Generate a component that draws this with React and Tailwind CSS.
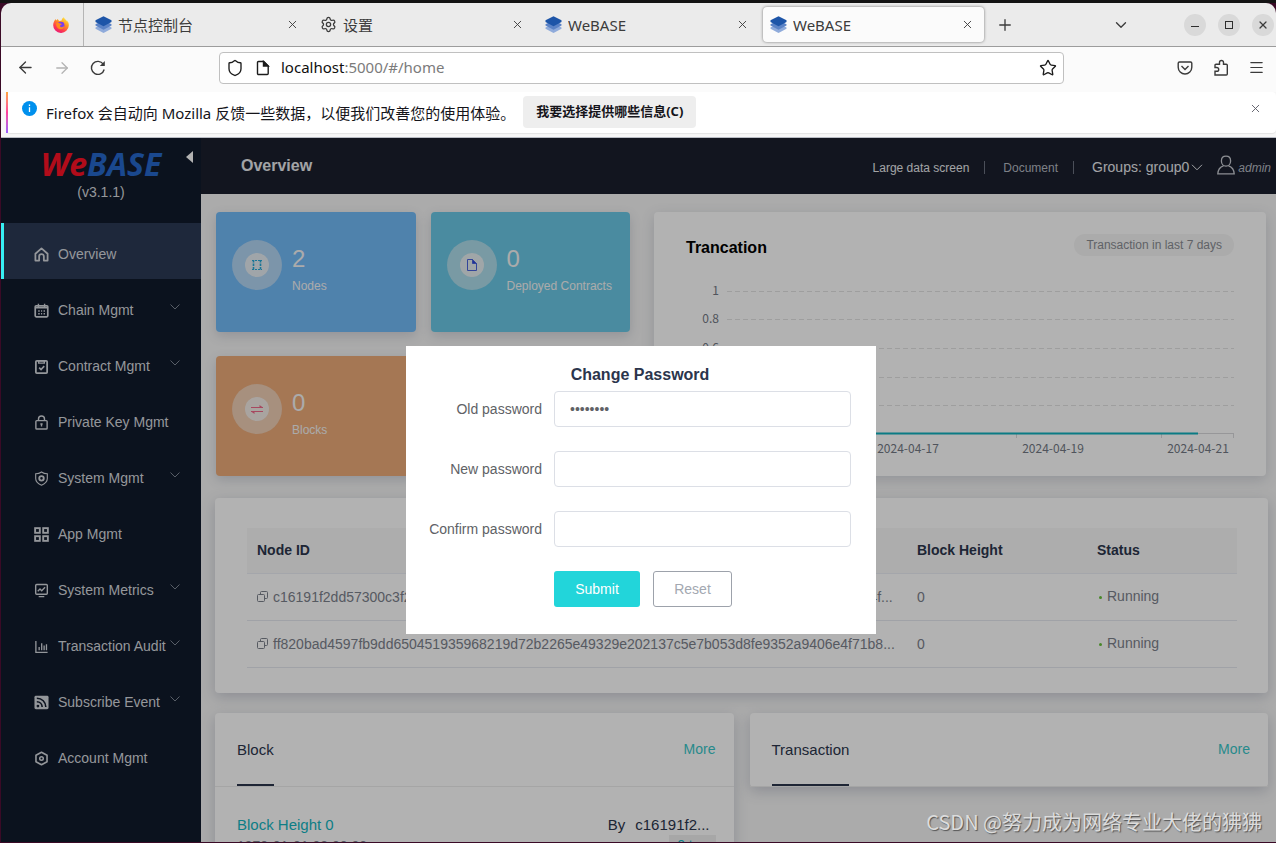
import { useState } from 'react';
import {
  ArrowLeft,
  ArrowRight,
  ChevronDown,
  Menu,
  Plus,
  Settings,
  Shield,
  Star,
  X,
} from 'lucide-react';
import clsx from 'clsx';

const TABS = [
  { id: 1, title: '节点控制台', icon: 'webase' },
  { id: 2, title: '设置', icon: 'settings' },
  { id: 3, title: 'WeBASE', icon: 'webase' },
  { id: 4, title: 'WeBASE', icon: 'webase', active: true },
];

const MENU = [
  { label: 'Overview', icon: 'home', active: true },
  { label: 'Chain Mgmt', icon: 'chain', children: true },
  { label: 'Contract Mgmt', icon: 'contract', children: true },
  { label: 'Private Key Mgmt', icon: 'lock' },
  { label: 'System Mgmt', icon: 'system', children: true },
  { label: 'App Mgmt', icon: 'app' },
  { label: 'System Metrics', icon: 'metrics', children: true },
  { label: 'Transaction Audit', icon: 'audit', children: true },
  { label: 'Subscribe Event', icon: 'event', children: true },
  { label: 'Account Mgmt', icon: 'account' },
];

const STATS = [
  { label: 'Nodes', value: 2, icon: 'nodes', bg: 'bg-[#72baf7]' },
  { label: 'Deployed Contracts', value: 0, icon: 'contracts', bg: 'bg-[#6bc8e5]' },
  { label: 'Blocks', value: 0, icon: 'blocks', bg: 'bg-[#ecab79]' },
];

const NODES = [
  {
    id: 'c16191f2dd57300c3f28a7b04e95c16d3e8027ab49d5e063b71a9d284e57c0b396ad18e7402b5d4f...',
    height: 0,
    status: 'Running',
  },
  {
    id: 'ff820bad4597fb9dd650451935968219d72b2265e49329e202137c5e7b053d8fe9352a9406e4f71b8...',
    height: 0,
    status: 'Running',
  },
];

const Y_TICKS = [
  { label: '1', y: 10 },
  { label: '0.8', y: 38 },
  { label: '0.6', y: 67 },
  { label: '0.4', y: 96 },
  { label: '0.2', y: 124 },
];

const X_LABELS = [
  { label: '2024-04-15', x: 77 },
  { label: '2024-04-17', x: 222 },
  { label: '2024-04-19', x: 367 },
  { label: '2024-04-21', x: 512 },
];

const FIELDS = [
  { id: 'old', label: 'Old password' },
  { id: 'new', label: 'New password' },
  { id: 'confirm', label: 'Confirm password' },
];

/* ---------- icons ---------- */

function FirefoxIcon() {
  return (
    <svg width="16" height="16" viewBox="0 0 16 16">
      <defs>
        <linearGradient id="fx" x1="0.8" y1="0" x2="0.2" y2="1">
          <stop offset="0" stopColor="#fff04a" />
          <stop offset="0.35" stopColor="#ff9a1f" />
          <stop offset="0.7" stopColor="#ff3b4e" />
          <stop offset="1" stopColor="#e4157e" />
        </linearGradient>
      </defs>
      <path
        fill="url(#fx)"
        d="M15.4 5.6c-.4-.9-1.1-1.8-1.7-2.1.5 1 .8 1.6.9 2.1C13.600 3.200 12 2.300 10.700.2c-1.400.8-2 2.400-2.100 3.200-.8 0-1.500.2-2.200.5C5.300 3.600 5 2.500 5 2c-.8.400-1.400 1.100-1.800 1.600-.3-.4-.3-1.500-.3-1.700C1.500 3 .2 5.500.2 8a7.800 7.800 0 0 0 15.600.4c.1-.9-.1-1.900-.4-2.800z"
      />
      <circle cx="8" cy="8.200" r="3.400" fill="#7a3df0" />
      <path fill="#ff8a1c" d="M3.200 6.200c1.300-.9 2.600-.6 3.600.1 1 .6 2 .4 2 .9s-1.400.7-1.700 1.300c-.3.800.2 1.500 1.200 1.700 1.200.2 2.300-.5 3-1.600.1 2.400-1.600 3.700-3.500 3.700-2.900 0-5-2.800-4.600-6.100z" />
    </svg>
  );
}

function WebaseIcon() {
  return (
    <svg width="17" height="17" viewBox="0 0 17 17">
      <path fill="#8fabdb" d="M.5 11.500 8.500 7.500l8 4v1.200l-8 4.300-8-4.300z" />
      <path fill="#5b83c6" d="M.5 8.200 8.500 4.200l8 4v1.300l-8 4.200-8-4.200z" />
      <path fill="#1d55a8" d="M.5 4.300 8.500.3l8 4v1.700l-8 4.200-8-4.200z" />
    </svg>
  );
}

const menuShapes = {
  home: (
    <path d="M1.500 7.200 8 1.500l6.500 5.700v7.300H10.500V10a2.500 2.500 0 0 0-5 0v4.500h-4z" strokeWidth="1.900" strokeLinejoin="round" />
  ),
  chain: (
    <>
      <rect x="1.300" y="3" width="13.400" height="11.700" rx="1" strokeWidth="1.800" />
      <path d="M4.700.8v3.700M11.300.8v3.700M1.500 5h13" strokeWidth="1.500" />
      <path d="M4.500 8.500h1.600M7.500 8.500h1.200M10.200 8.500h1.500M4.500 11.500h1.600M7.500 11.500h1.200M10.200 11.500h1.500" strokeWidth="1.600" />
    </>
  ),
  contract: (
    <>
      <rect x="2" y="2" width="12" height="13" rx="1" strokeWidth="1.900" />
      <path d="M5 1.800h6v2.600H5z" strokeWidth="1.500" />
      <path d="m5.500 9.200 2 2 3.400-3.600" strokeWidth="1.700" />
    </>
  ),
  lock: (
    <>
      <rect x="2" y="6" width="12" height="9" rx="1" strokeWidth="1.500" />
      <path d="M4.800 6V4.200a3.200 3.200 0 0 1 6.400 0V6" strokeWidth="1.500" />
      <path d="M8 8.800v3.400M6.800 9.600h2.400" strokeWidth="1.500" />
    </>
  ),
  system: (
    <>
      <path d="M8 1c1.800 1.300 3.900 1.900 6.200 1.900v5c0 3.200-2.400 5.500-6.200 7.300-3.800-1.800-6.200-4.100-6.200-7.300v-5C4.100 2.900 6.200 2.300 8 1z" strokeWidth="1.200" />
      <circle cx="8" cy="7.800" r="2.400" strokeWidth="2" />
    </>
  ),
  app: (
    <g strokeWidth="2">
      <rect x="1.200" y="1.200" width="5" height="5" />
      <rect x="9.800" y="1.200" width="5" height="5" />
      <rect x="1.200" y="9.800" width="5" height="5" />
      <rect x="9.800" y="9.800" width="5" height="5" />
    </g>
  ),
  metrics: (
    <>
      <rect x="1.800" y="1.600" width="12.400" height="10.400" rx="1" strokeWidth="1.500" />
      <path d="m4 8.800 2.400-2.300 1.800 1.800L11.800 4.500M5 14.500h6" strokeWidth="1.500" />
    </>
  ),
  audit: <path d="M2 2v12.300h12.500M5.500 12V8.500M8.200 12V4.500M10.800 12V7M13.300 12V5.500" strokeWidth="1.400" />,
  event: (
    <>
      <rect x=".5" y=".8" width="15" height="14.400" rx="1.500" fill="currentColor" stroke="none" />
      <g stroke="#111a2b" strokeWidth="1.700">
        <path d="M3 3.400c5.500 0 9.600 4 9.600 9.500M3 7.200c3.300 0 5.700 2.400 5.700 5.700" />
        <circle cx="4.200" cy="11.800" r=".6" />
      </g>
    </>
  ),
  account: (
    <>
      <path d="m8 1.300 5.900 3.300v6.800L8 14.700l-5.900-3.300V4.600z" strokeWidth="1.700" strokeLinejoin="round" />
      <circle cx="8" cy="8" r="1.900" strokeWidth="1.600" />
    </>
  ),
};

function MenuIcon({ name }) {
  return (
    <svg width="15" height="15" viewBox="0 0 16 16" fill="none" stroke="currentColor" className="shrink-0">
      {menuShapes[name]}
    </svg>
  );
}

const statShapes = {
  nodes: (
    <g stroke="#27a9d8" fill="none" strokeWidth="1">
      <path d="M2.500 1v10M9.500 1v10" strokeWidth="1.600" strokeDasharray="2.500 1" />
      <path d="M1 1.500h10M1 10.500h10" strokeDasharray="2 1" />
    </g>
  ),
  contracts: (
    <g stroke="#4a63dd" fill="none" strokeWidth="1">
      <path d="M1.500.5h5l4 4v7h-9z" />
      <path d="M6.500.5v4h4z" fill="#3048d8" />
    </g>
  ),
  blocks: (
    <g stroke="#f0698a" fill="#f0698a" strokeWidth="1">
      <path d="M0 4.500h12M0 8.500h12" />
      <path d="M8.500 2v2.500H12zM3.500 11V8.500H0z" stroke="none" />
    </g>
  ),
};

function CopyIcon() {
  return (
    <svg width="11" height="11" viewBox="0 0 11 11" fill="none" stroke="currentColor" className="shrink-0">
      <rect x=".5" y="3.500" width="7" height="7" rx="1" />
      <path d="M3.500 3.500v-2a1 1 0 0 1 1-1h5a1 1 0 0 1 1 1v5a1 1 0 0 1-1 1h-2" />
    </svg>
  );
}

/* ---------- browser ---------- */

function TabStrip() {
  return (
    <div className="flex h-11 items-stretch rounded-t-[10px] border-b border-[#9c9c9c] bg-[#ebebeb] text-[#3c3c3c]">
      <div className="flex w-[83px] items-center justify-end border-r border-[#b5b5b5] pr-[14px]">
        <FirefoxIcon />
      </div>
      {TABS.map((tab) => (
        <div key={tab.id} className="flex w-[225px] py-1 pl-1">
          <div
            className={clsx(
              'flex min-w-0 flex-1 items-center rounded pl-[7px] pr-2.5',
              tab.active && 'bg-[#fbfbfb] shadow-[0_0_3px_rgba(0,0,0,0.5)]'
            )}
          >
            {tab.icon === 'webase' ? <WebaseIcon /> : <Settings className="size-[17px]" strokeWidth={1.8} />}
            <span className="ml-1.5 flex-1 truncate pt-0.5 text-[15px]">{tab.title}</span>
            <button aria-label="Close tab">
              <X className="size-[13px]" strokeWidth={1.7} />
            </button>
          </div>
        </div>
      ))}
      <button aria-label="New tab" className="ml-3">
        <Plus className="size-[18px]" strokeWidth={1.8} />
      </button>
      <div className="ml-auto flex items-center">
        <button aria-label="List all tabs" className="mr-[54px]">
          <ChevronDown className="size-[18px]" strokeWidth={1.8} />
        </button>
        <div className="flex gap-3 pr-0.5">
          <button aria-label="Minimize" className="grid size-[22px] place-items-center rounded-full bg-[#d9d9d9]">
            <span className="mt-1 h-px w-2 bg-[#2e2e2e]" />
          </button>
          <button aria-label="Maximize" className="grid size-[22px] place-items-center rounded-full bg-[#d9d9d9]">
            <span className="size-2 border border-[#2e2e2e]" />
          </button>
          <button aria-label="Close window" className="grid size-[22px] place-items-center rounded-full bg-[#d9d9d9]">
            <X className="size-3" strokeWidth={2.5} />
          </button>
        </div>
      </div>
    </div>
  );
}

function Toolbar() {
  return (
    <div className="flex h-[45px] items-center bg-[#fbfbfb] pb-1 pl-[15px] pr-[11px] text-[#3a3a3a]">
      <div className="flex gap-[18px]">
        <button aria-label="Back"><ArrowLeft className="size-[19px]" strokeWidth={1.7} /></button>
        <button aria-label="Forward" className="text-[#b3b3b3]"><ArrowRight className="size-[18px]" strokeWidth={1.7} /></button>
        <button aria-label="Reload">
          <svg width="18" height="18" viewBox="0 0 18 18" fill="none" stroke="currentColor" strokeWidth="1.400">
            <path d="M15.200 10.500A6.500 6.500 0 1 1 14.300 5.200" />
            <path d="M15.800 2v5h-5z" fill="currentColor" stroke="none" />
          </svg>
        </button>
      </div>
      <div className="mx-[112px] flex h-8 flex-1 items-center rounded border border-[#c0c0c0] bg-white px-1.5 text-[#1c1c1c]">
        <Shield className="size-[18px]" strokeWidth={1.8} />
        <svg width="14" height="16" viewBox="0 0 14 16" className="ml-3" fill="none" stroke="currentColor" strokeWidth="1.400">
          <path d="M2.500 1.500h5.200L12.200 6v7.500a1 1 0 0 1-1 1H2.500a1 1 0 0 1-1-1v-11a1 1 0 0 1 1-1z" />
          <path d="M7.500 1.500V6h4.700z" fill="currentColor" />
        </svg>
        <span className="ml-[11px] flex-1 text-[15px] text-[#7b7b7b]">
          <span className="text-[#0f0f0f]">localhost</span>:5000/#/home
        </span>
        <button aria-label="Bookmark"><Star className="size-[18px]" strokeWidth={1.8} /></button>
      </div>
      <div className="flex gap-[18px]">
        <button aria-label="Pocket">
          <svg width="18" height="18" viewBox="0 0 18 18" fill="none" stroke="currentColor" strokeWidth="1.400">
            <path d="M3.500 3h11a1.300 1.300 0 0 1 1.300 1.300v3.900a6.800 6.800 0 0 1-13.600 0V4.300A1.300 1.300 0 0 1 3.500 3z" />
            <path d="m5.500 7 3.500 3.400L12.500 7" />
          </svg>
        </button>
        <button aria-label="Extensions">
          <svg width="18" height="18" viewBox="0 0 18 18" fill="none" stroke="currentColor" strokeWidth="1.400">
            <path d="M3 16h11.300a1 1 0 0 0 1-1V6.200a1 1 0 0 0-1-1h-2.800V3.500a2 2 0 0 0-4 0v1.700H4a1 1 0 0 0-1 1v2.300h1.800a1.900 1.900 0 0 1 0 3.800H3z" />
          </svg>
        </button>
        <button aria-label="Menu"><Menu className="size-[17px]" strokeWidth={1.7} /></button>
      </div>
    </div>
  );
}

function Notice() {
  return (
    <div className="border-b border-[#b9bcc4] bg-[#f7f7f7] pb-1 pl-[5px]">
      <div className="flex h-[41px] rounded bg-white shadow-[0_1px_1px_rgba(0,0,0,0.08)]">
        <span className="w-0.5 bg-linear-to-b from-[#ffa436] via-[#ff3f9c] to-[#9a5cff]" />
        <svg width="15" height="15" viewBox="0 0 15 15" className="ml-3.5 mt-[9px]">
          <circle cx="7.500" cy="7.500" r="7.500" fill="#0090ed" />
          <path d="M7.500 6.300v4.700M7.500 3.600v1.400" stroke="#fff" strokeWidth="1.300" />
        </svg>
        <p className="ml-[9px] mt-[9px] text-[15px] leading-6 text-[#15141a]">
          Firefox 会自动向 Mozilla 反馈一些数据，以便我们改善您的使用体验。
        </p>
        <button className="ml-2 mt-1 h-8 rounded bg-[#eeeeee] px-[13px] text-[13px] font-bold text-[#15141a]">
          我要选择提供哪些信息(C)
        </button>
        <button aria-label="Dismiss" className="ml-auto mr-3.5 mt-2.5 self-start text-[#5b5b66]">
          <X className="size-[13px]" strokeWidth={1.7} />
        </button>
      </div>
    </div>
  );
}

/* ---------- console ---------- */

function Sidebar() {
  return (
    <aside className="w-[200px] shrink-0 bg-[#111a2b] text-sm text-[#d5d8de]">
      <div className="relative h-[85px] pt-[9px] text-center">
        <div className="font-['Open_Sans',sans-serif] text-[32px] font-bold italic leading-[34px] text-[#2668cc]">
          <span className="text-[#ff1226]">We</span>BASE
        </div>
        <div className="leading-[22px]">(v3.1.1)</div>
        <button aria-label="Collapse menu" className="absolute right-2 top-[13px]">
          <svg width="7" height="12" viewBox="0 0 7 12" fill="#ffffff">
            <path d="M7 0v12L0 6z" />
          </svg>
        </button>
      </div>
      <nav>
        {MENU.map((item) => (
          <a
            key={item.label}
            href="#"
            className={clsx(
              'relative flex h-14 items-center whitespace-nowrap pl-[33px] pr-[21px] pt-1.5',
              item.active && 'bg-[#2c3a55]'
            )}
          >
            {/* marker stays bright above the dialog mask */}
            {item.active && <span className="absolute inset-y-0 left-0 z-10 w-[3px] bg-[#37eef2]" />}
            <MenuIcon name={item.icon} />
            <span className="ml-[9px]">{item.label}</span>
            {item.children && (
              <svg width="10" height="6" viewBox="0 0 10 6" fill="none" stroke="#7f8794" className="mb-1.5 ml-auto shrink-0">
                <path d="m.5.5 4.500 4.500L9.500.5" />
              </svg>
            )}
          </a>
        ))}
      </nav>
    </aside>
  );
}

function Header() {
  return (
    <header className="flex h-14 shrink-0 items-center bg-[#1a1f2d] pl-10 pr-[5px] text-[#e8eaee]">
      <h1 className="text-base font-bold">Overview</h1>
      <div className="ml-auto flex items-center pt-0.5 text-xs">
        <a href="#" className="pt-0.5">Large data screen</a>
        <span className="ml-[15px] h-[13px] w-px bg-[#6c7280]" />
        <a href="#" className="ml-[18px] pt-0.5 text-[#b4b8c0]">Document</a>
        <span className="ml-[15px] h-[13px] w-px bg-[#6c7280]" />
        <button className="ml-[18px] flex items-center text-sm">
          Groups: group0
          <svg width="12" height="7" viewBox="0 0 12 7" fill="none" stroke="currentColor" className="ml-0.5">
            <path d="m1 .8 5 5 5-5" />
          </svg>
        </button>
        <button className="ml-3.5 flex items-center gap-[3px] italic text-[#b4b8c0]">
          <svg width="18" height="20" viewBox="0 0 18 20" fill="none" stroke="#c9ccd3" strokeWidth="1.300" className="mb-1">
            <path d="M9 1.200c2.700 0 4.600 1.900 4.600 4.800S11.700 11.200 9 11.200 4.400 8.900 4.400 6 6.300 1.200 9 1.200z" />
            <path d="M6.500 10.800C3.300 11.800 1 14.500.8 18.800h16.400c-.2-4.300-2.500-7-5.700-8" />
          </svg>
          <span className="pt-0.5">admin</span>
        </button>
      </div>
    </header>
  );
}

function StatCard({ label, value, icon, bg }) {
  return (
    <div className={clsx('flex h-[120px] rounded-sm pl-4 pt-7 text-[#f5f5f5] shadow-[0_4px_12px_rgba(70,80,110,0.2)]', bg)}>
      <div className="grid size-[50px] shrink-0 place-items-center rounded-full bg-[#f2f2f2]/50">
        <div className="grid size-6 place-items-center rounded-full bg-[#f2f2f2]/80">
          <svg width="12" height="12" viewBox="0 0 12 12">{statShapes[icon]}</svg>
        </div>
      </div>
      <div className="ml-2.5 mt-1 whitespace-nowrap">
        <div className="text-2xl leading-[30px]">{value}</div>
        <div className="mt-0.5 text-xs leading-5">{label}</div>
      </div>
    </div>
  );
}

function ChartCard() {
  return (
    <section className="rounded-sm bg-white px-8 pt-[22px] shadow-[0_4px_14px_rgba(70,80,110,0.2)]">
      <div className="flex items-start justify-between">
        <h2 className="pt-0.5 text-base font-bold text-black">Trancation</h2>
        <span className="rounded-full bg-[#f5f5f5] px-3 text-xs leading-[22px] text-[#8a8d93]">
          Transaction in last 7 days
        </span>
      </div>
      <svg viewBox="0 0 548 184" className="mt-[21px] w-full font-['Noto_Sans_CJK_SC',sans-serif] text-xs" fill="#737984">
        {Y_TICKS.map((t) => (
          <g key={t.label}>
            <text x="33" y={t.y + 4} textAnchor="end">{t.label}</text>
            <path d={`M41 ${t.y + 0.5}H548`} stroke="#e2e2e2" strokeDasharray="5 3" />
          </g>
        ))}
        <text x="33" y="157" textAnchor="end">0</text>
        <path d="M41 152.500H548M41.500 153v4M186.500 153v4M330.500 153v4M475.500 153v4M547.500 153v4" stroke="#d9d9dc" />
        <path d="M77 152.500H512" stroke="#10b0bd" strokeWidth="2" />
        {X_LABELS.map((l) => (
          <text key={l.label} x={l.x} y="172" textAnchor="middle">{l.label}</text>
        ))}
      </svg>
    </section>
  );
}

function NodeTable() {
  return (
    <section className="mt-[22px] rounded-sm bg-white pb-[25px] pl-8 pr-[31px] pt-[30px] shadow-[0_4px_14px_rgba(70,80,110,0.25)]">
      <table className="w-full table-fixed border-collapse text-left text-sm text-[#7c818c]">
        <thead>
          <tr className="h-[45px] border-b border-[#ebeef5] bg-[#f8f8f8] text-[#2b354c]">
            <th className="px-2.5">Node ID</th>
            <th className="w-[180px] px-2.5">Block Height</th>
            <th className="w-[150px] px-2.5">Status</th>
          </tr>
        </thead>
        <tbody>
          {NODES.map((node) => (
            <tr key={node.id} className="h-[47px] border-b border-[#e6e8f0]">
              <td className="px-2.5">
                <div className="flex items-center gap-[5px] overflow-hidden whitespace-nowrap">
                  <CopyIcon />
                  {node.id}
                </div>
              </td>
              <td className="px-2.5">{node.height}</td>
              <td className="px-2.5 pb-0.5">
                <div className="flex items-center gap-[5px] pl-0.5">
                  <span className="mt-1 size-[3px] rounded-full bg-[#67c23a]" />
                  {node.status}
                </div>
              </td>
            </tr>
          ))}
        </tbody>
      </table>
    </section>
  );
}

function ListCard({ title, children }) {
  return (
    <section className="self-start rounded-sm bg-white shadow-[0_4px_14px_rgba(70,80,110,0.25)]">
      <div className="flex h-[74px] items-stretch justify-between border-b border-[#ececec] pl-[22px] pr-[18px]">
        <h2 className="border-b-2 border-[#2b354c] text-[15px] leading-[74px] text-[#2b354c]">{title}</h2>
        <a href="#" className="text-sm leading-[73px] text-[#37c6c8]">More</a>
      </div>
      {children}
    </section>
  );
}

function Dashboard() {
  return (
    <main className="flex-1 bg-[#f5f5f5] pl-3.5 pr-2 pt-[18px]">
      <div className="grid grid-cols-[414fr_612fr] gap-6 pl-px pr-0.5">
        <div className="grid grid-cols-2 gap-x-[15px] gap-y-6">
          {STATS.map((s) => (
            <StatCard key={s.label} {...s} />
          ))}
        </div>
        <ChartCard />
      </div>
      <NodeTable />
      <div className="mt-5 grid grid-cols-2 gap-4">
        <ListCard title="Block">
          <div className="px-[22px] pb-5 pt-[27px] text-[15px] text-[#2b354c]">
            <div className="flex justify-between leading-[22px]">
              <a href="#" className="text-[#13b5c1]">Block Height 0</a>
              <span className="flex gap-2.5 pr-0.5">
                <span>By</span>
                <span>c16191f2...</span>
              </span>
            </div>
            <div className="-mr-1 flex items-start justify-between text-sm text-[#7c818c]">
              <span>1970-01-01 08:00:00</span>
              <span className="-mt-px bg-[#f0f0f0] px-2 text-[#13b5c1]">0 txn</span>
            </div>
          </div>
        </ListCard>
        <ListCard title="Transaction" />
      </div>
    </main>
  );
}

function PasswordDialog() {
  const [values, setValues] = useState({ old: '12345678', new: '', confirm: '' });

  const handleReset = () => setValues({ old: '', new: '', confirm: '' });

  return (
    <div className="absolute inset-0 flex items-center justify-center bg-black/30 pl-[5px]">
      <form
        role="dialog"
        aria-labelledby="pwd-title"
        onSubmit={(e) => e.preventDefault()}
        className="w-[470px] bg-white pb-[27px] pl-[23px] pr-[25px] pt-[17px] text-sm text-[#606266]"
      >
        <h2 id="pwd-title" className="mb-1 text-center text-base font-bold text-[#2b354c]">Change Password</h2>
        {FIELDS.map((f) => (
          <div key={f.id} className="mb-6 flex items-center gap-3">
            <label htmlFor={f.id} className="flex-1 whitespace-nowrap text-right">{f.label}</label>
            <input
              id={f.id}
              type="password"
              value={values[f.id]}
              onChange={(e) => setValues({ ...values, [f.id]: e.target.value })}
              className="h-9 w-[297px] rounded border border-[#dcdfe6] px-[15px] outline-none"
            />
          </div>
        ))}
        <div className="flex gap-[13px] pl-[125px]">
          <button type="submit" className="h-9 w-[86px] rounded-[3px] bg-[#22d5da] text-white">Submit</button>
          <button
            type="button"
            onClick={handleReset}
            className="h-9 w-[79px] rounded-[3px] border border-[#9da2ab] text-[#a3a8b1]"
          >
            Reset
          </button>
        </div>
      </form>
    </div>
  );
}

export default function App() {
  return (
    <div className="flex h-screen flex-col overflow-hidden bg-[#3a0a26] pb-px pl-px font-['Liberation_Sans',Arial,sans-serif]">
      <div className="-ml-px h-[3px] shrink-0 bg-[#131313]" />
      <div className="shrink-0 font-['Noto_Sans','Noto_Sans_CJK_SC',sans-serif]">
        <TabStrip />
        <Toolbar />
        <Notice />
      </div>
      <div className="relative flex min-h-0 flex-1 overflow-hidden">
        <Sidebar />
        <div className="flex min-w-0 flex-1 flex-col">
          <Header />
          <Dashboard />
        </div>
        <PasswordDialog />
        <div className="absolute bottom-1.5 right-3.5 font-['Noto_Sans_CJK_SC',sans-serif] text-xl leading-7 text-[#dcdcdc] [text-shadow:1px_1px_1px_#555]">
          CSDN @努力成为网络专业大佬的狒狒
        </div>
      </div>
    </div>
  );
}
